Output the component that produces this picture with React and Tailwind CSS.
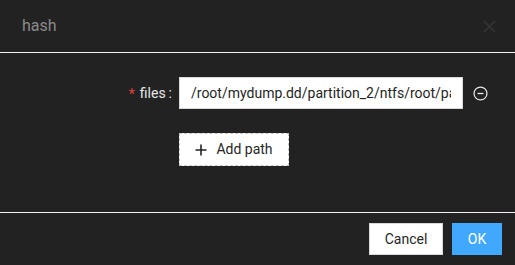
import { useState } from 'react';

function CloseIcon() {
  return (
    <svg width="13" height="13" viewBox="0 0 14 14" fill="none">
      <path d="M1 1L13 13M13 1L1 13" stroke="#363636" strokeWidth="1.6" />
    </svg>
  );
}

function MinusCircle() {
  return (
    <svg width="15" height="15" viewBox="0 0 16 16" fill="none">
      <circle cx="8" cy="8" r="6.9" stroke="#e8e8e8" strokeWidth="1.3" />
      <path d="M4.8 8H11.2" stroke="#e8e8e8" strokeWidth="1.4" />
    </svg>
  );
}

function PlusIcon() {
  return (
    <svg width="12" height="12" viewBox="0 0 12 12" fill="none">
      <path d="M6 0.5V11.5M0.5 6H11.5" stroke="#222" strokeWidth="1.6" />
    </svg>
  );
}

export default function App() {
  const [path, setPath] = useState('/root/mydump.dd/partition_2/ntfs/root/path/to/file.bin');

  return (
    <div
      className="w-[515px] h-[265px] bg-[#222222] flex flex-col"
      style={{ fontFamily: 'Roboto, "Liberation Sans", sans-serif' }}
    >
      <div className="h-[52px] flex items-center justify-between pl-[22px] pr-[19px] shrink-0">
        <span className="text-[16px] text-[#8a8a8a]">hash</span>
        <CloseIcon />
      </div>
      <div className="h-px bg-[#f2f2f2] shrink-0" />

      <div className="flex-1 pt-6">
        <div className="flex items-center">
          <div className="w-[179px] pr-[7px] flex justify-end items-center text-[14px] text-[#e6e6e6]">
            <span className="text-[#e0403f] mr-[5px] text-[14px] leading-none translate-y-[1px]">*</span>
            <span>files</span>
            <span className="ml-[3px]">:</span>
          </div>
          <input
            value={path}
            onChange={(e) => setPath(e.target.value)}
            className="w-[284px] h-[32px] bg-white text-[#1f1f1f] text-[14px] px-[11px] outline-none border border-[#d9d9d9]"
          />
          <div className="ml-[10px] flex items-center">
            <MinusCircle />
          </div>
        </div>

        <div className="pl-[179px] mt-[24px]">
          <button className="w-[110px] h-[33px] bg-white border border-dashed border-[#c8c8c8] flex items-center justify-center gap-[9px] text-[14px] text-[#262626]">
            <PlusIcon />
            <span>Add path</span>
          </button>
        </div>
      </div>

      <div className="h-px bg-[#f2f2f2] shrink-0" />
      <div className="h-[52px] flex items-center justify-end gap-[9px] pr-[13px] shrink-0">
        <button className="w-[74px] h-[32px] bg-white border border-[#d9d9d9] text-[14px] text-[#262626]">
          Cancel
        </button>
        <button className="w-[50px] h-[32px] bg-[#40a9ff] text-[14px] text-white">
          OK
        </button>
      </div>
    </div>
  );
}
